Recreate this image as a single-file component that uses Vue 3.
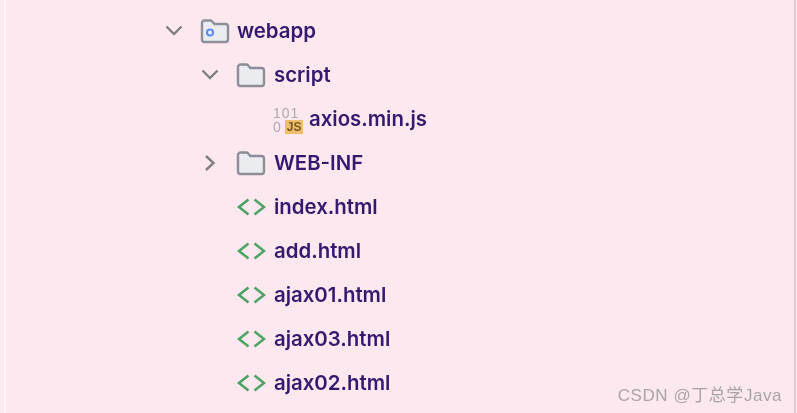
<script setup>
const rows = [
  { name: 'webapp', depth: 0, arrow: 'down', icon: 'webfolder' },
  { name: 'script', depth: 1, arrow: 'down', icon: 'folder' },
  { name: 'axios.min.js', depth: 2, icon: 'lib' },
  { name: 'WEB-INF', depth: 1, arrow: 'right', icon: 'folder' },
  { name: 'index.html', depth: 1, icon: 'html' },
  { name: 'add.html', depth: 1, icon: 'html' },
  { name: 'ajax01.html', depth: 1, icon: 'html' },
  { name: 'ajax03.html', depth: 1, icon: 'html' },
  { name: 'ajax02.html', depth: 1, icon: 'html' },
]
</script>

<template>
  <div class="page">
    <ul class="tree">
      <li v-for="row in rows" :key="row.name" class="row" :class="'depth-' + row.depth">
        <span class="arrow">
          <svg v-if="row.arrow === 'down'" width="20" height="20" viewBox="0 0 20 20">
            <path d="M2.5 5.5 L10 13 L17.5 5.5" fill="none" stroke="#7f7f82" stroke-width="2.4" />
          </svg>
          <svg v-if="row.arrow === 'right'" width="20" height="20" viewBox="0 0 20 20">
            <path d="M6 3 L13.5 10 L6 17" fill="none" stroke="#7f7f82" stroke-width="2.4" />
          </svg>
        </span>

        <span class="icon">
          <svg v-if="row.icon === 'folder' || row.icon === 'webfolder'" width="30" height="26" viewBox="0 0 30 26">
            <path d="M2 5 a2.5 2.5 0 0 1 2.5 -2.5 h6 a2 2 0 0 1 1.5 .7 l2.5 2.8 h11 a2.5 2.5 0 0 1 2.5 2.5 v13 a2.5 2.5 0 0 1 -2.5 2.5 h-21 a2.5 2.5 0 0 1 -2.5 -2.5 z" fill="#ebecf0" stroke="#8c8f96" stroke-width="2.4" />
            <circle v-if="row.icon === 'webfolder'" cx="10" cy="14.5" r="3" fill="#f2f4fa" stroke="#5f8ef5" stroke-width="2.2" />
          </svg>
          <span v-if="row.icon === 'lib'" class="lib">
            <span class="bits">101</span>
            <span class="lib-bottom"><span class="bits">0</span><span class="js">JS</span></span>
          </span>
          <svg v-if="row.icon === 'html'" width="30" height="20" viewBox="0 0 30 20">
            <path d="M12.5 2.5 L3 10 L12.5 17.5 M18.5 2.5 L28 10 L18.5 17.5" fill="none" stroke="#4da565" stroke-width="2.6" />
          </svg>
        </span>

        <span class="name">{{ row.name }}</span>
      </li>
    </ul>
    <div class="watermark">CSDN @丁总学Java</div>
  </div>
</template>

<style>
html, body {
  margin: 0;
  background: #fce8ee;
}
</style>

<style scoped>
.page {
  position: relative;
  width: 797px;
  height: 413px;
  overflow: hidden;
  /* pale stripe on the left edge, grey one on the right */
  background:
    linear-gradient(#fff5f8, #fff5f8) 4px 0 / 2px 100% no-repeat,
    linear-gradient(#dccdd3, #dccdd3) 794px 0 / 2px 100% no-repeat,
    #fce8ee;
  font-family: Inter, "Noto Sans", sans-serif;
}

.tree {
  list-style: none;
  margin: 0;
  padding: 9px 0 0 164px;
  filter: blur(0.5px);
}

.row {
  display: flex;
  align-items: center;
  height: 44px;
}

.depth-1 {
  padding-left: 36px;
}

.depth-2 {
  padding-left: 72px;
}

.arrow {
  display: flex;
  width: 20px;
  height: 20px;
  margin-right: 16px;
}

.icon {
  display: flex;
  align-items: center;
  justify-content: flex-start;
  width: 30px;
  margin-right: 7px;
}

.depth-1 .icon {
  margin-right: 8px;
}

.depth-2 .icon {
  width: 31px;
  margin-left: 1px;
  margin-right: 5px;
}

.name {
  margin-bottom: 2px;
  font-size: 20.4px;
  font-weight: 600;
  color: #34196e;
  white-space: nowrap;
}

.lib {
  display: flex;
  flex-direction: column;
  padding-top: 2px;
  font-family: "Liberation Sans", sans-serif;
  line-height: 14px;
}

.bits {
  font-size: 14px;
  letter-spacing: 1px;
  color: #a9abb0;
}

.lib-bottom {
  display: flex;
  align-items: center;
}

.js {
  margin-left: 3px;
  padding: 0 2px;
  font-size: 12px;
  font-weight: 700;
  color: #7a5a20;
  background: #f0bd6c;
}

.watermark {
  position: absolute;
  right: 15px;
  bottom: 7px;
  font-family: "Liberation Sans", "Noto Sans CJK SC", sans-serif;
  font-size: 17px;
  letter-spacing: 0.55px;
  color: #a8a5a8;
  filter: blur(0.3px);
}
</style>
